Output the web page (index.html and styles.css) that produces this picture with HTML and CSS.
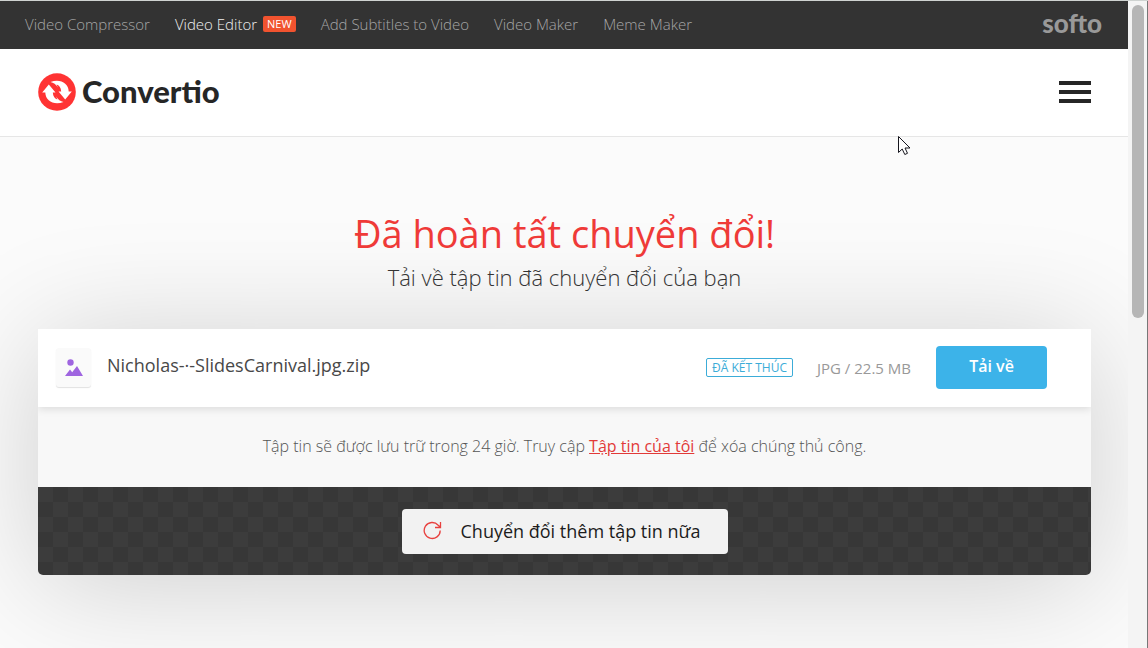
FILE: index.html
```html
<!DOCTYPE html>
<html lang="vi">
<head>
<meta charset="utf-8">
<meta name="viewport" content="width=device-width, initial-scale=1">
<title>Convertio</title>
<link rel="stylesheet" href="styles.css">
</head>
<body>
<div class="window">
  <div class="page">
    <nav class="topbar">
      <a class="topbar-link" href="#">Video Compressor</a>
      <a class="topbar-link active" href="#">Video Editor<span class="new-tag">NEW</span></a>
      <a class="topbar-link" href="#">Add Subtitles to Video</a>
      <a class="topbar-link" href="#">Video Maker</a>
      <a class="topbar-link" href="#">Meme Maker</a>
      <a class="softo" href="#">softo</a>
    </nav>
    <header class="header">
      <a class="brand" href="#">
        <svg class="brand-mark" viewBox="0 0 38 38" aria-hidden="true">
          <circle cx="19" cy="19" r="18.800" fill="#ff3333"/>
          <path fill="#fff" d="M4.200 19.500 L10.800 11.500 L17.500 19.500 H14.800 C15 23.500 17 25.800 19.500 26.500 L18 23.500 C20 26.500 22.500 28.500 25.500 29 C16 32.500 7.500 28 7.300 19.500 Z"/>
          <path fill="#fff" d="M33.800 18.500 L27.200 26.500 L20.500 18.500 H23.200 C23 14.500 21 12.200 18.500 11.500 L20 14.500 C18 11.500 15.500 9.500 12.500 9 C22 5.500 30.500 10 30.700 18.500 Z"/>
        </svg>
        <span class="brand-name">Convertio</span>
      </a>
      <button class="menu-button" type="button" aria-label="Menu"><span></span><span></span><span></span></button>
    </header>
    <main class="content">
      <h1 class="title">Đã hoàn tất chuyển đổi!</h1>
      <p class="subtitle">Tải về tập tin đã chuyển đổi của bạn</p>
      <section class="card">
        <div class="file-row">
          <span class="file-icon">
            <svg viewBox="0 0 18 17" aria-hidden="true">
              <circle cx="5.500" cy="3.500" r="3.200" fill="#9f65e0"/>
              <path fill="#9f65e0" d="M0 17 L5 10.500 L7.200 13.200 L12 7 L18 17 Z"/>
            </svg>
          </span>
          <span class="file-name">Nicholas-·-SlidesCarnival.jpg.zip</span>
          <span class="status">ĐÃ KẾT THÚC</span>
          <span class="file-size">JPG / 22.5 MB</span>
          <button class="download" type="button">Tải về</button>
        </div>
        <p class="notice">Tập tin sẽ được lưu trữ trong 24 giờ. Truy cập <a href="#">Tập tin của tôi</a> để xóa chúng thủ công.</p>
        <div class="card-footer">
          <button class="again" type="button">
            <svg class="again-icon" viewBox="0 0 19 19" fill="none" stroke="#e8413f" stroke-width="1.300" aria-hidden="true">
              <path d="M17.200 9.500 A8 8 0 1 1 15.200 4.200 L17.500 6.300 M17.500 1 V6.500 H12"/>
            </svg>
            Chuyển đổi thêm tập tin nữa
          </button>
        </div>
      </section>
    </main>
  </div>
  <div class="scrollbar"><div class="thumb"></div></div>
  <svg class="cursor" viewBox="0 0 13 20" aria-hidden="true">
    <path d="M.5 .5 V16.500 L4.200 13 L6.800 18.500 L9.500 17.300 L7 12 H12 Z" fill="#fff" stroke="#16161e"/>
  </svg>
</div>
</body>
</html>
```

FILE: styles.css
```css
* { box-sizing: border-box; }
body {
  margin: 0;
  font-family: "Open Sans", "Noto Sans", sans-serif;
  color: #333;
}
a { color: inherit; text-decoration: none; }
button { font: inherit; border: 0; cursor: pointer; }
h1, p { margin: 0; }

.window {
  position: relative;
  display: flex;
  min-height: 100vh;
  border-top: 1px solid #cfd3d1;
  overflow: hidden;
}
.page {
  flex: 1;
  min-width: 0;
  display: flex;
  flex-direction: column;
  overflow: hidden;
}

.topbar {
  display: flex;
  align-items: center;
  gap: 25px;
  height: 48px;
  padding: 0 26px 2px 25px;
  background: #333;
  font-size: 15px;
  font-weight: 300;
  color: #a6a6a6;
  white-space: nowrap;
}
.topbar-link { display: flex; align-items: center; gap: 6px; }
.topbar-link.active { color: #f0f0f0; }
.new-tag {
  padding: 0 4px;
  border-radius: 2px;
  background: #f1532f;
  color: #fff;
  font-size: 11px;
  line-height: 16px;
  font-weight: 400;
}
.softo {
  margin-left: auto;
  padding-bottom: 3px;
  font: 900 26px/32px Lato, sans-serif;
  color: #999;
}

.header {
  display: flex;
  align-items: center;
  justify-content: space-between;
  height: 88px;
  padding: 0 37px 1px 38px;
  background: #fff;
  border-bottom: 1px solid #e6e6e6;
}
.brand { display: flex; align-items: center; gap: 6px; }
.brand-mark { width: 38px; height: 38px; }
.brand-name { padding-bottom: 2px; font: 900 31px/38px Lato, sans-serif; color: #262626; }
.menu-button {
  display: flex;
  flex-direction: column;
  gap: 5px;
  width: 32px;
  padding: 0;
  background: none;
}
.menu-button span { height: 4px; background: #262626; }

.content {
  flex: 1;
  padding: 68px 37px 73px 38px;
  background: #fbfbfb;
  text-align: center;
}
.title {
  font-size: 38px;
  line-height: 56px;
  font-weight: 400;
  color: #ef3a38;
}
.subtitle {
  margin-bottom: 36px;
  font-size: 22px;
  line-height: 32px;
  font-weight: 300;
}
.card {
  border-radius: 0 0 5px 5px;
  background: #f8f8f8;
  box-shadow: 0 10px 120px rgba(0, 0, 0, .18);
}
.file-row {
  display: flex;
  align-items: center;
  height: 78px;
  padding: 0 44px 2px 18px;
  background: #fff;
  box-shadow: 0 2px 8px rgba(0, 0, 0, .12);
  clip-path: inset(0 0 -12px 0);
}
.file-icon {
  display: grid;
  place-items: center;
  width: 35px;
  height: 39px;
  border-radius: 3px;
  background: #fafafa;
  box-shadow: 0 1px 1px rgba(0, 0, 0, .12);
}
.file-icon svg { width: 18px; height: 17px; }
.file-name {
  margin: 0 auto 4px 16px;
  font-size: 18px;
  line-height: 24px;
  color: #484848;
}
.status {
  padding: 0 5px;
  border: 1px solid #3cacd8;
  border-radius: 2px;
  font-size: 12px;
  line-height: 17px;
  color: #3cacd8;
}
.file-size {
  margin: 2px 25px 0 24px;
  font-size: 15px;
  line-height: 24px;
  color: #999;
}
.download {
  width: 111px;
  height: 43px;
  padding: 0 0 3px;
  border-radius: 4px;
  background: #3cb3e9;
  color: #fff;
  font-size: 16px;
  font-weight: 600;
}
.notice {
  padding: 27px 20px 29px;
  font-size: 16px;
  line-height: 24px;
  font-weight: 300;
  color: #555;
}
.notice a { color: #e23a38; font-weight: 400; text-decoration: underline; }
.card-footer {
  display: flex;
  justify-content: center;
  padding: 22px 20px 21px;
  border-radius: 0 0 5px 5px;
  background: conic-gradient(#373737 25%, #3c3c3c 0 50%, #373737 0 75%, #3c3c3c 0) 0 0 / 30px 30px;
}
.again {
  display: flex;
  align-items: center;
  gap: 19px;
  height: 45px;
  padding: 0 27px 2px 21px;
  border-radius: 4px;
  background: #f2f2f2;
  color: #1c1c1c;
  font-size: 18px;
  font-weight: 500;
}
.again-icon { width: 19px; height: 19px; }

.scrollbar {
  width: 20px;
  padding: 4px 3px 0 4px;
  border-right: 1px solid #777;
  background: #f4f4f4;
}
.thumb { height: 313px; border-radius: 6px; background: #b6b6b6; }
.cursor {
  position: absolute;
  left: 898px;
  top: 135px;
  width: 13px;
  height: 20px;
}
```
